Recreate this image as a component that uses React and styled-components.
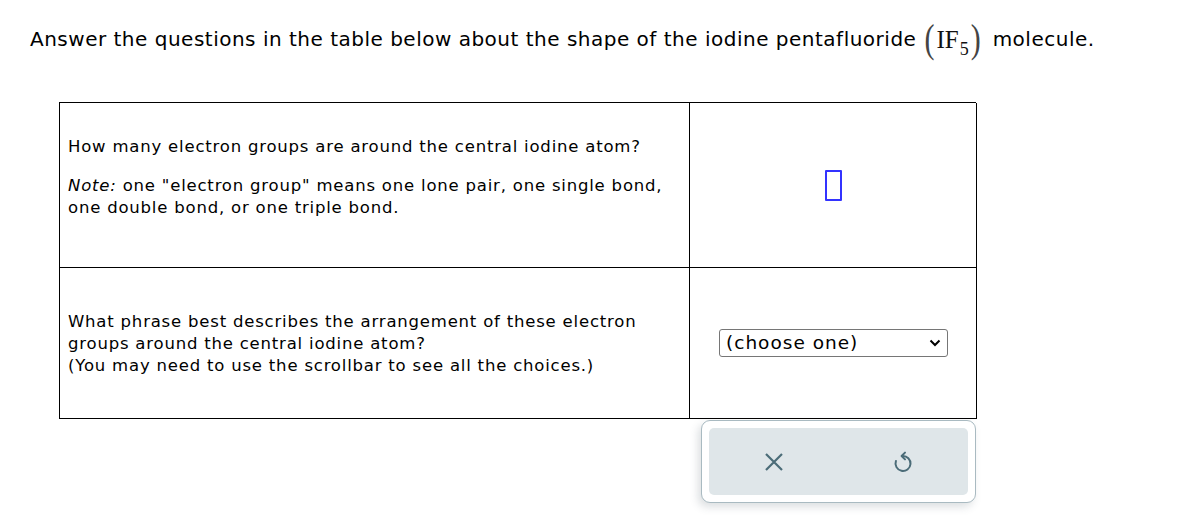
import React from "react";
import styled, { createGlobalStyle } from "styled-components";

const Global = createGlobalStyle`
  html, body {
    margin: 0;
    padding: 0;
    background: #fff;
  }
  body {
    font-family: "DejaVu Sans", Verdana, sans-serif;
    color: #000;
  }
`;

const Pagina = styled.div`
  width: 1195px;
  height: 531px;
  overflow: hidden;
`;

const Titulo = styled.div`
  display: flex;
  align-items: center;
  height: 44px;
  margin-top: 17px;
  padding-left: 30px;
  font-size: 20px;
  letter-spacing: 0.5px;
  white-space: nowrap;
`;

const Formula = styled.span`
  display: inline-block;
  margin: 0 10px 0 6px;
  font-family: "Liberation Serif", "Times New Roman", serif;
  font-size: 25px;
  line-height: 44px;
  letter-spacing: 0;
  color: #111;
`;

const Parentese = styled.span`
  display: inline-block;
  font-size: 30px;
  transform: scaleY(1.35);
  color: #444;
  margin: 0 2px;
`;

const Sub = styled.span`
  display: inline-block;
  font-size: 18px;
  vertical-align: -7px;
  margin-left: 1px;
  line-height: 1;
`;

const Conteudo = styled.div`
  padding-left: 59px;
  margin-top: 41px;
  width: 917px;
`;

const Tabela = styled.div`
  display: grid;
  grid-template-columns: 630px 287px;
  grid-template-rows: 165px 151px;
  border-top: 1px solid #000;
  border-left: 1px solid #000;
`;

const Celula = styled.div`
  display: flex;
  flex-direction: column;
  justify-content: center;
  align-items: ${(p) => (p.centro ? "center" : "flex-start")};
  border-right: 1px solid #000;
  border-bottom: 1px solid #000;
  padding: ${(p) => (p.baixo ? "2px 8px 0" : "0 8px")};
  font-size: 16.5px;
  letter-spacing: 0.8px;
  line-height: 22px;
  white-space: nowrap;
`;

const Paragrafo = styled.p`
  margin: 0 0 17px 0;
  &:last-child {
    margin-bottom: ${(p) => (p.sobra ? "15px" : "0")};
  }
`;

const CaixaResposta = styled.div`
  width: 13px;
  height: 27px;
  border: 2px solid #3333ff;
  border-radius: 1px;
  margin-left: 1px;
`;

const Seletor = styled.div`
  display: flex;
  align-items: center;
  justify-content: space-between;
  box-sizing: border-box;
  width: 229px;
  height: 28px;
  border: 1px solid #767676;
  border-radius: 3px;
  padding: 0 6px 0 6px;
  font-size: 18.5px;
  letter-spacing: 1px;
  color: #000;
  margin-left: 1px;
`;

const LinhaBotoes = styled.div`
  display: flex;
  justify-content: flex-end;
  margin-top: 1px;
`;

const Painel = styled.div`
  box-sizing: border-box;
  width: 275px;
  height: 83px;
  padding: 7px;
  border: 1px solid #a9bac1;
  border-radius: 9px;
  background: #fff;
  box-shadow: -3px 4px 8px rgba(60, 80, 90, 0.18);
`;

const Botoes = styled.div`
  display: grid;
  grid-template-columns: 1fr 1fr;
  height: 100%;
  background: #dfe6e9;
  border-radius: 5px;
`;

const Botao = styled.div`
  display: flex;
  align-items: center;
  justify-content: center;
  color: #4b6c78;
`;

const IconeX = () => (
  <svg width="20" height="20" viewBox="0 0 20 20" fill="none">
    <path d="M2 2 L18 18 M18 2 L2 18" stroke="currentColor" strokeWidth="2.2" />
  </svg>
);

const IconeDesfazer = () => (
  <svg width="24" height="24" viewBox="0 0 24 24" fill="none">
    <path
      d="M11.5 6 A7.5 7.5 0 1 1 4.95 10.94"
      stroke="currentColor"
      strokeWidth="2"
      strokeLinecap="round"
    />
    <path
      d="M14 2.6 L10.6 6 L14 9.4"
      stroke="currentColor"
      strokeWidth="2"
      strokeLinecap="round"
      strokeLinejoin="round"
    />
  </svg>
);

const Seta = () => (
  <svg width="12" height="8" viewBox="0 0 12 8" fill="none">
    <path d="M1.5 1.5 L6 6 L10.5 1.5" stroke="#000" strokeWidth="2" />
  </svg>
);

export default function App() {
  return (
    <Pagina>
      <Global />
      <Titulo>
        Answer the questions in the table below about the shape of the iodine pentafluoride
        <Formula>
          <Parentese>(</Parentese>
          IF<Sub>5</Sub>
          <Parentese>)</Parentese>
        </Formula>
        molecule.
      </Titulo>
      <Conteudo>
        <Tabela>
          <Celula>
            <Paragrafo>How many electron groups are around the central iodine atom?</Paragrafo>
            <Paragrafo sobra>
              <i>Note:</i> one "electron group" means one lone pair, one single bond,
              <br />
              one double bond, or one triple bond.
            </Paragrafo>
          </Celula>
          <Celula centro>
            <CaixaResposta />
          </Celula>
          <Celula baixo>
            <Paragrafo>
              What phrase best describes the arrangement of these electron
              <br />
              groups around the central iodine atom?
              <br />
              (You may need to use the scrollbar to see all the choices.)
            </Paragrafo>
          </Celula>
          <Celula centro>
            <Seletor>
              <span>(choose one)</span>
              <Seta />
            </Seletor>
          </Celula>
        </Tabela>
        <LinhaBotoes>
          <Painel>
            <Botoes>
              <Botao>
                <IconeX />
              </Botao>
              <Botao>
                <IconeDesfazer />
              </Botao>
            </Botoes>
          </Painel>
        </LinhaBotoes>
      </Conteudo>
    </Pagina>
  );
}
